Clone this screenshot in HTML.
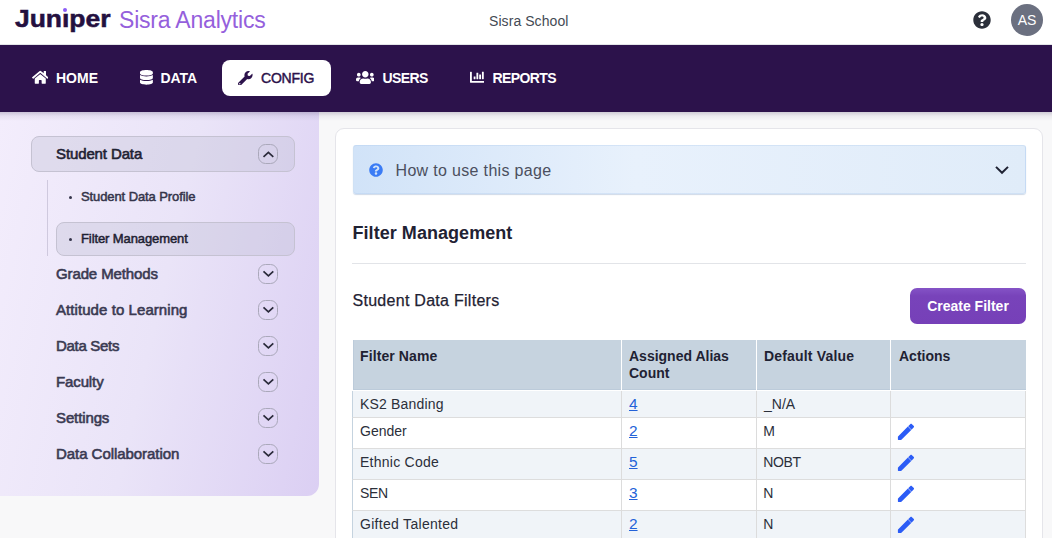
<!DOCTYPE html>
<html>
<head>
<meta charset="utf-8">
<title>Filter Management</title>
<style>
*{box-sizing:border-box;margin:0;padding:0}
html,body{width:1052px;height:538px;overflow:hidden}
body{font-family:"Liberation Sans",sans-serif;background:#f8f8f9;position:relative;color:#1f2233}
.abs{position:absolute;white-space:nowrap;line-height:1}
/* header */
#hdr{position:absolute;left:0;top:0;width:1052px;height:45px;background:#fff;border-bottom:1px solid #e3e5e8}
#logo1{left:15px;top:8.3px;font-size:23px;font-weight:bold;color:#24103f;transform:scaleX(1.15);transform-origin:0 0;-webkit-text-stroke:.5px #24103f}
#logo2{left:119px;top:8.8px;font-size:23px;color:#9560dc;letter-spacing:-0.2px}
#school{left:489px;top:13.6px;font-size:14px;color:#444a54;letter-spacing:0.07px}
#avatar{position:absolute;left:1011px;top:4px;width:32px;height:32px;border-radius:50%;background:#6b7080;color:#fff;font-size:14px;text-align:center;line-height:32px}
/* nav */
#nav{position:absolute;left:0;top:45px;width:1052px;height:67px;background:#2c124b;}
.nv{font-size:14px;font-weight:bold;color:#fff;top:71px}
#pill{position:absolute;left:222px;top:60px;width:109px;height:36px;border-radius:8px;background:#fff}
/* sidebar */
#side{position:absolute;left:0;top:112px;width:319px;height:384px;border-radius:0 0 12px 0;background:linear-gradient(103deg,#f3edfc 0%,#eae4f8 50%,#dbcff3 100%)}
.sbox{position:absolute;border:1px solid #c5c2d2;background:rgba(188,188,208,.33);border-radius:8px}
.mi{font-size:15px;color:#3a3a52;left:56px;letter-spacing:-0.12px;-webkit-text-stroke:.6px currentColor;margin-top:-1px}
.si{font-size:13px;color:#34344a;left:81px;letter-spacing:-0.1px;-webkit-text-stroke:.5px currentColor}
.chev{position:absolute;left:258px;width:20px;height:20px;border:1px solid #aaa8ba;border-radius:7.5px}
.chev svg{position:absolute;left:4px;top:4px}
.dot{position:absolute;width:3px;height:3px;border-radius:50%;background:#34344a;left:69px;margin-top:.1px}
/* main */
#card{position:absolute;left:335px;top:128px;width:708px;height:430px;background:#fff;border:1px solid #e5e5ea;border-radius:9px}
#info{position:absolute;left:353px;top:145px;width:673px;height:49px;border-radius:3px;border:1px solid rgba(170,200,235,.3);background:linear-gradient(90deg,#d1e3f8 0%,#e8f1fc 42%,#e0ecf9 100%);box-shadow:0 1px 1px rgba(120,150,190,.35)}
#howto{left:395.5px;top:162.7px;font-size:16px;color:#4b4f5e;letter-spacing:.33px}
#h1{left:352.5px;top:224px;font-size:18px;font-weight:bold;color:#1f2233;letter-spacing:.05px}
#hr{position:absolute;left:352px;top:263px;width:674px;height:1px;background:#e2e4e8}
#h2{left:352.5px;top:292.6px;font-size:16px;color:#1f2233;letter-spacing:.28px;-webkit-text-stroke:.25px #1f2233}
#btn{position:absolute;left:910px;top:288px;width:116px;height:36px;border-radius:7px;background:linear-gradient(#8553c6 0,#7843ba 22%,#7640b8 100%);color:#fff;font-size:14px;font-weight:bold;text-align:center;line-height:36px}
/* table */
#thead{position:absolute;left:353px;top:340px;width:673px;height:50px;background:#c6d3df;box-shadow:inset 1px -1px 0 rgba(170,190,210,.35)}
.th{font-size:14px;font-weight:bold;color:#1f2233}
.td{font-size:14px;color:#2b2f3a}
.lk{color:#2362d8;text-decoration:underline;transform:scaleX(1.1);transform-origin:0 0}
.trow{position:absolute;left:352px;width:674px;background:#fff;border:1px solid #dddddd;border-left-color:#c5d3df;border-top:none}
.trow.odd{background:#f0f4f8}
.vl{position:absolute;top:391px;width:1px;height:147px;background:#dcdcdc}
.vlh{position:absolute;top:340px;width:1px;height:51px;background:#fff}
</style>
</head>
<body>
<div id="hdr"></div>
<div class="abs" id="logo1">Jun&#305;per</div>
<div style="position:absolute;left:63px;top:7.8px;width:4px;height:4px;border-radius:50%;background:#8b5cf6"></div>
<div class="abs" id="logo2">Sisra Analytics</div>
<div class="abs" id="school">Sisra School</div>
<svg class="abs" style="left:973.00px;top:11.00px" width="18.00" height="18.00" viewBox="0 0 512 512"><path fill="#2b2f3a" d="M504 256c0 136.997-111.043 248-248 248S8 392.997 8 256C8 119.083 119.043 8 256 8s248 111.083 248 248zM262.655 90c-54.497 0-89.255 22.957-116.549 63.758-3.536 5.286-2.353 12.415 2.715 16.258l34.699 26.310c5.205 3.947 12.621 3.008 16.665-2.122 17.864-22.658 30.113-35.797 57.303-35.797 20.429 0 45.698 13.148 45.698 32.958 0 14.976-12.363 22.667-32.534 33.976C247.128 238.528 216 254.941 216 296v4c0 6.627 5.373 12 12 12h56c6.627 0 12-5.373 12-12v-1.333c0-28.462 83.186-29.647 83.186-106.667 0-58.002-60.165-102-116.531-102zM256 338c-25.365 0-46 20.635-46 46 0 25.364 20.635 46 46 46s46-20.636 46-46c0-25.365-20.635-46-46-46z"/></svg>
<div id="avatar">AS</div>

<div id="nav"></div>
<div id="pill"></div>
<div class="abs nv" style="left:56px">HOME</div>
<div class="abs nv" style="left:160.5px;letter-spacing:-0.1px">DATA</div>
<div class="abs nv" style="left:261px;color:#2c124b;letter-spacing:-0.2px;font-weight:normal;-webkit-text-stroke:.45px #2c124b">CONFIG</div>
<div class="abs nv" style="left:382.5px;letter-spacing:-0.6px">USERS</div>
<div class="abs nv" style="left:492.5px;letter-spacing:-0.6px">REPORTS</div>

<svg class="abs" style="left:31.70px;top:70.30px" width="16.54" height="14.70" viewBox="0 0 576 512"><path fill="#fff" d="M280.37 148.26L96 300.11V464a16 16 0 0 0 16 16l112.06-.29a16 16 0 0 0 15.92-16V368a16 16 0 0 1 16-16h64a16 16 0 0 1 16 16v95.64a16 16 0 0 0 16 16.05L464 480a16 16 0 0 0 16-16V300L295.67 148.26a12.19 12.19 0 0 0-15.3 0zM571.6 251.47L488 182.56V44.05a12 12 0 0 0-12-12h-56a12 12 0 0 0-12 12v72.61L318.47 43a48 48 0 0 0-61 0L4.34 251.47a12 12 0 0 0-1.6 16.9l25.5 31A12 12 0 0 0 45.15 301l235.22-193.74a12.19 12.19 0 0 1 15.3 0L530.9 301a12 12 0 0 0 16.9-1.6l25.5-31a12 12 0 0 0-1.7-16.93z"/></svg>
<svg class="abs" style="left:139.70px;top:70.30px" width="12.86" height="14.70" viewBox="0 0 448 512"><path fill="#fff" d="M448 73.143v45.714C448 159.143 347.667 192 224 192S0 159.143 0 118.857V73.143C0 32.857 100.333 0 224 0s224 32.857 224 73.143zM448 176v102.857C448 319.143 347.667 352 224 352S0 319.143 0 278.857V176c48.125 33.143 136.208 48.572 224 48.572S399.874 209.143 448 176zm0 160v102.857C448 479.143 347.667 512 224 512S0 479.143 0 438.857V336c48.125 33.143 136.208 48.572 224 48.572S399.874 369.143 448 336z"/></svg>
<svg class="abs" style="left:238.00px;top:70.60px" width="14.60" height="14.60" viewBox="0 0 512 512"><path fill="#2c124b" d="M507.73 109.1c-2.24-9.03-13.54-12.09-20.12-5.51l-74.36 74.36-67.88-11.31-11.31-67.88 74.36-74.36c6.62-6.62 3.43-17.9-5.66-20.16-47.38-11.74-99.55.91-136.58 37.93-39.64 39.64-50.55 97.1-34.05 147.2L18.74 402.76c-24.99 24.99-24.99 65.51 0 90.5 24.99 24.99 65.51 24.99 90.5 0l213.21-213.21c50.12 16.71 107.47 5.68 147.37-34.22 37.07-37.07 49.7-89.32 37.91-136.73zM64 472c-13.25 0-24-10.75-24-24 0-13.26 10.75-24 24-24s24 10.74 24 24c0 13.25-10.75 24-24 24z"/></svg>
<svg class="abs" style="left:355.70px;top:70.30px" width="18.62" height="14.90" viewBox="0 0 640 512"><path fill="#fff" d="M96 224c35.3 0 64-28.7 64-64s-28.7-64-64-64-64 28.7-64 64 28.7 64 64 64zm448 0c35.3 0 64-28.7 64-64s-28.7-64-64-64-64 28.7-64 64 28.7 64 64 64zm32 32h-64c-17.6 0-33.5 7.1-45.1 18.6 40.3 22.1 68.9 62 75.1 109.4h66c17.7 0 32-14.3 32-32v-32c0-35.3-28.7-64-64-64zm-256 0c61.9 0 112-50.1 112-112S381.9 32 320 32 208 82.1 208 144s50.1 112 112 112zm76.8 32h-8.3c-20.8 10-43.9 16-68.5 16s-47.6-6-68.5-16h-8.3C179.6 288 128 339.6 128 403.2V432c0 26.5 21.5 48 48 48h288c26.5 0 48-21.5 48-48v-28.8c0-63.6-51.6-115.2-115.2-115.2zm-223.700-13.4C161.5 263.1 145.6 256 128 256H64c-35.3 0-64 28.7-64 64v32c0 17.7 14.3 32 32 32h65.9c6.300-47.4 34.900-87.300 75.200-109.400z"/></svg>
<svg class="abs" style="left:469.60px;top:70.30px" width="14.70" height="14.70" viewBox="0 0 512 512"><path fill="#fff" d="M332.8 320h38.400c6.400 0 12.800-6.400 12.800-12.800V172.800c0-6.400-6.400-12.800-12.800-12.800h-38.400c-6.400 0-12.800 6.400-12.800 12.800v134.400c0 6.400 6.400 12.800 12.800 12.800zm96 0h38.400c6.400 0 12.800-6.400 12.800-12.800V76.800c0-6.400-6.400-12.800-12.800-12.800h-38.400c-6.400 0-12.800 6.400-12.800 12.800v230.400c0 6.400 6.400 12.800 12.800 12.800zm-288 0h38.400c6.400 0 12.800-6.400 12.800-12.800v-70.400c0-6.400-6.400-12.800-12.800-12.800h-38.400c-6.400 0-12.800 6.400-12.800 12.800v70.400c0 6.400 6.400 12.800 12.800 12.800zm96 0h38.400c6.400 0 12.800-6.400 12.800-12.800V108.800c0-6.400-6.400-12.800-12.800-12.800h-38.400c-6.400 0-12.800 6.400-12.800 12.800v198.400c0 6.400 6.400 12.800 12.800 12.800zM496 384H64V80c0-8.840-7.160-16-16-16H16C7.160 64 0 71.160 0 80v336c0 17.670 14.330 32 32 32h464c8.840 0 16-7.160 16-16v-32c0-8.840-7.160-16-16-16z"/></svg>
<div id="side"></div>
<div style="position:absolute;left:0;top:112px;width:1052px;height:9px;background:linear-gradient(rgba(40,25,70,.2),rgba(40,25,70,.06) 45%,rgba(40,25,70,0))"></div>
<div class="sbox" style="left:31px;top:136px;width:264px;height:36px"></div>
<div class="abs mi" style="top:147px;color:#1f2233">Student Data</div>
<div style="position:absolute;left:47px;top:180px;width:1px;height:76px;background:#cfc9de"></div>
<div class="dot" style="top:196px"></div>
<div class="abs si" style="top:190px">Student Data Profile</div>
<div class="sbox" style="left:56px;top:222px;width:239px;height:34px"></div>
<div class="dot" style="top:238px"></div>
<div class="abs si" style="top:232px;color:#1f2233">Filter Management</div>
<div class="abs mi" style="top:267px">Grade Methods</div>
<div class="abs mi" style="top:303px;letter-spacing:.07px">Attitude to Learning</div>
<div class="abs mi" style="top:339px;letter-spacing:-.3px">Data Sets</div>
<div class="abs mi" style="top:375px">Faculty</div>
<div class="abs mi" style="top:411px">Settings</div>
<div class="abs mi" style="top:447px;letter-spacing:-.05px">Data Collaboration</div>

<div class="chev" style="top:144px"><svg width="20" height="20" viewBox="0 0 20 20" style="left:-1px;top:-1px"><path d="M5.5 12.9 L10.4 8.4 L15.3 12.9" fill="none" stroke="#2a2a3a" stroke-width="1.7" stroke-linecap="butt" stroke-linejoin="miter"/></svg></div>
<div class="chev" style="top:264px"><svg width="20" height="20" viewBox="0 0 20 20" style="left:-1px;top:-1px"><path d="M5.5 7.4 L10.4 11.9 L15.3 7.4" fill="none" stroke="#2a2a3a" stroke-width="1.7" stroke-linecap="butt" stroke-linejoin="miter"/></svg></div>
<div class="chev" style="top:300px"><svg width="20" height="20" viewBox="0 0 20 20" style="left:-1px;top:-1px"><path d="M5.5 7.4 L10.4 11.9 L15.3 7.4" fill="none" stroke="#2a2a3a" stroke-width="1.7" stroke-linecap="butt" stroke-linejoin="miter"/></svg></div>
<div class="chev" style="top:336px"><svg width="20" height="20" viewBox="0 0 20 20" style="left:-1px;top:-1px"><path d="M5.5 7.4 L10.4 11.9 L15.3 7.4" fill="none" stroke="#2a2a3a" stroke-width="1.7" stroke-linecap="butt" stroke-linejoin="miter"/></svg></div>
<div class="chev" style="top:372px"><svg width="20" height="20" viewBox="0 0 20 20" style="left:-1px;top:-1px"><path d="M5.5 7.4 L10.4 11.9 L15.3 7.4" fill="none" stroke="#2a2a3a" stroke-width="1.7" stroke-linecap="butt" stroke-linejoin="miter"/></svg></div>
<div class="chev" style="top:408px"><svg width="20" height="20" viewBox="0 0 20 20" style="left:-1px;top:-1px"><path d="M5.5 7.4 L10.4 11.9 L15.3 7.4" fill="none" stroke="#2a2a3a" stroke-width="1.7" stroke-linecap="butt" stroke-linejoin="miter"/></svg></div>
<div class="chev" style="top:444px"><svg width="20" height="20" viewBox="0 0 20 20" style="left:-1px;top:-1px"><path d="M5.5 7.4 L10.4 11.9 L15.3 7.4" fill="none" stroke="#2a2a3a" stroke-width="1.7" stroke-linecap="butt" stroke-linejoin="miter"/></svg></div>
<div id="card"></div>
<div id="info"></div>
<svg class="abs" style="left:369.00px;top:162.80px" width="14.00" height="14.00" viewBox="0 0 512 512"><path fill="#3b7cf5" d="M504 256c0 136.997-111.043 248-248 248S8 392.997 8 256C8 119.083 119.043 8 256 8s248 111.083 248 248zM262.655 90c-54.497 0-89.255 22.957-116.549 63.758-3.536 5.286-2.353 12.415 2.715 16.258l34.699 26.310c5.205 3.947 12.621 3.008 16.665-2.122 17.864-22.658 30.113-35.797 57.303-35.797 20.429 0 45.698 13.148 45.698 32.958 0 14.976-12.363 22.667-32.534 33.976C247.128 238.528 216 254.941 216 296v4c0 6.627 5.373 12 12 12h56c6.627 0 12-5.373 12-12v-1.333c0-28.462 83.186-29.647 83.186-106.667 0-58.002-60.165-102-116.531-102zM256 338c-25.365 0-46 20.635-46 46 0 25.364 20.635 46 46 46s46-20.636 46-46c0-25.365-20.635-46-46-46z"/></svg>
<div class="abs" id="howto">How to use this page</div>
<svg class="abs" style="left:992px;top:160px" width="20" height="20" viewBox="0 0 20 20"><path d="M4 6.9 L10 12.8 L16 6.9" fill="none" stroke="#1f2233" stroke-width="2"/></svg>
<div class="abs" id="h1">Filter Management</div>
<div id="hr"></div>
<div class="abs" id="h2">Student Data Filters</div>
<div id="btn">Create Filter</div>

<div id="thead"></div>
<div class="abs th" style="left:360px;top:348.7px;letter-spacing:.1px">Filter Name</div>
<div class="abs th" style="left:629px;top:348.7px">Assigned Alias</div>
<div class="abs th" style="left:629px;top:365.7px">Count</div>
<div class="abs th" style="left:764px;top:348.7px;letter-spacing:.17px">Default Value</div>
<div class="abs th" style="left:899px;top:348.7px">Actions</div>
<div class="trow odd" style="top:391px;height:27px"></div>
<div class="abs td" style="left:360px;top:397.3px;letter-spacing:0.18px">KS2 Banding</div>
<div class="abs td lk" style="left:629px;top:397.3px">4</div>
<div class="abs td" style="left:764px;top:397.3px">_N/A</div>
<div class="trow" style="top:418px;height:31px"></div>
<div class="abs td" style="left:360px;top:424.3px">Gender</div>
<div class="abs td lk" style="left:629px;top:424.3px">2</div>
<div class="abs td" style="left:763.3px;top:424.3px">M</div>
<svg class="abs" style="left:894px;top:421px" width="24" height="24" viewBox="0 0 24 24"><g transform="translate(1.2,0) scale(0.9)" fill="#2b5cf6"><path d="M3 17.46v3.04c0 .28.22.5.5.5h3.04c.13 0 .26-.05.35-.15L17.81 9.940l-3.75-3.750L3.150 17.100c-.1.1-.15.220-.15.360z"/><path d="M20.71 7.040c.39-.39.39-1.020 0-1.410l-2.340-2.340c-.39-.39-1.020-.39-1.410 0l-2.560 2.560 3.750 3.750z"/></g></svg>
<div class="trow odd" style="top:449px;height:31px"></div>
<div class="abs td" style="left:360px;top:455.3px;letter-spacing:0.26px">Ethnic Code</div>
<div class="abs td lk" style="left:629px;top:455.3px">5</div>
<div class="abs td" style="left:763.3px;top:455.3px;letter-spacing:-.4px">NOBT</div>
<svg class="abs" style="left:894px;top:452px" width="24" height="24" viewBox="0 0 24 24"><g transform="translate(1.2,0) scale(0.9)" fill="#2b5cf6"><path d="M3 17.46v3.04c0 .28.22.5.5.5h3.04c.13 0 .26-.05.35-.15L17.81 9.940l-3.75-3.750L3.150 17.100c-.1.1-.15.220-.15.360z"/><path d="M20.71 7.040c.39-.39.39-1.020 0-1.410l-2.340-2.340c-.39-.39-1.020-.39-1.410 0l-2.560 2.560 3.750 3.750z"/></g></svg>
<div class="trow" style="top:480px;height:31px"></div>
<div class="abs td" style="left:360px;top:486.3px;letter-spacing:-0.30px">SEN</div>
<div class="abs td lk" style="left:629px;top:486.3px">3</div>
<div class="abs td" style="left:763.3px;top:486.3px">N</div>
<svg class="abs" style="left:894px;top:483px" width="24" height="24" viewBox="0 0 24 24"><g transform="translate(1.2,0) scale(0.9)" fill="#2b5cf6"><path d="M3 17.46v3.04c0 .28.22.5.5.5h3.04c.13 0 .26-.05.35-.15L17.81 9.940l-3.75-3.750L3.150 17.100c-.1.1-.15.220-.15.360z"/><path d="M20.71 7.040c.39-.39.39-1.020 0-1.410l-2.340-2.340c-.39-.39-1.020-.39-1.410 0l-2.560 2.560 3.750 3.750z"/></g></svg>
<div class="trow odd" style="top:511px;height:31px"></div>
<div class="abs td" style="left:360px;top:517.3px;letter-spacing:0.30px">Gifted Talented</div>
<div class="abs td lk" style="left:629px;top:517.3px">2</div>
<div class="abs td" style="left:763.3px;top:517.3px">N</div>
<svg class="abs" style="left:894px;top:514px" width="24" height="24" viewBox="0 0 24 24"><g transform="translate(1.2,0) scale(0.9)" fill="#2b5cf6"><path d="M3 17.46v3.04c0 .28.22.5.5.5h3.04c.13 0 .26-.05.35-.15L17.81 9.940l-3.75-3.750L3.150 17.100c-.1.1-.15.220-.15.360z"/><path d="M20.71 7.040c.39-.39.39-1.020 0-1.410l-2.340-2.340c-.39-.39-1.020-.39-1.410 0l-2.560 2.560 3.750 3.750z"/></g></svg>
<div class="vl" style="left:621px"></div>
<div class="vlh" style="left:621px"></div>
<div class="vl" style="left:756px"></div>
<div class="vlh" style="left:756px"></div>
<div class="vl" style="left:890px"></div>
<div class="vlh" style="left:890px"></div>
</body>
</html>
